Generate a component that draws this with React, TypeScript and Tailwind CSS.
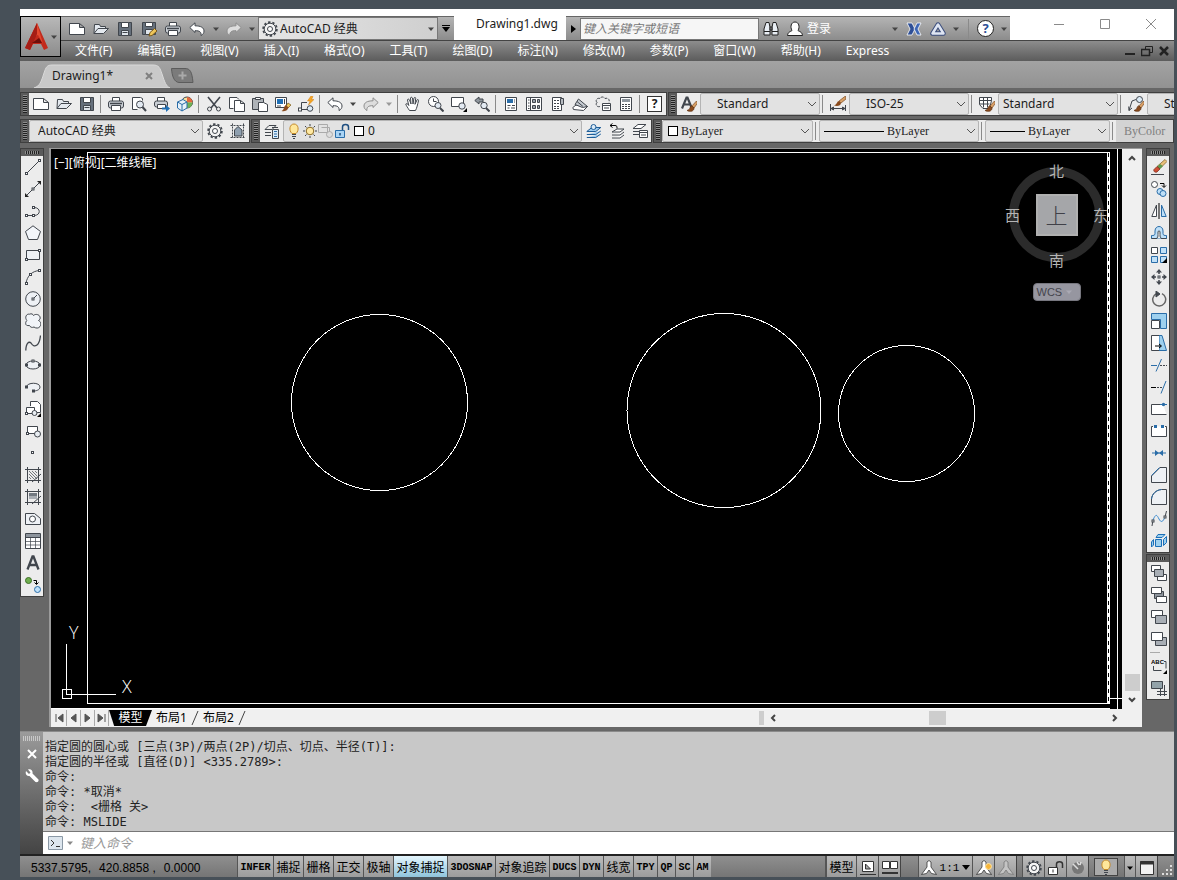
import type { ReactNode } from "react";

const INK = "#41464d";
const BLUE = "#2a6da8";

// small square grip used by most of the drawing icons
const Node = ({ x, y }: { x: number; y: number }) => (
  <rect x={x - 1} y={y - 1} width="2" height="2" fill="#fff" stroke={INK} />
);

const Brush = () => (
  <g transform="translate(5 5) scale(.7)">
    <path d="M15 0L8.500 7l3 3L16.500 3z" fill="#d9a066" stroke="#7a4a22" />
    <path d="M8.500 7C5 7 7 12 1.500 13.500c4 2.500 10 1.500 10-3.500z" fill="#8a4b1e" stroke="#5b2f10" />
  </g>
);

const icons: Record<string, ReactNode> = {
  new: <path d="M.5 2.500h10l5 4v7H.5z M10.500 2.500v4h5" fill="#fff" />,
  open: <path d="M1 12.500l.5-9h5l1 2h5v2 M1 12.500l4-5h10.500l-5 5z" fill="#e4e9ef" />,
  save: (
    <>
      <path d="M1.500 1.500h13v13h-13z" fill="#66707c" />
      <path d="M4.500 1.500h7v5h-7z" fill="#fff" />
      <path d="M4.500 9.500h7v5h-7z" fill="#dfe5eb" />
      <path d="M5.500 11.500h5" />
    </>
  ),
  saveAs: (
    <>
      <path d="M1.500 1.500h13v12h-13z" fill="#66707c" />
      <path d="M4.500 1.500h7v4h-7z" fill="#fff" />
      <path d="M4.500 8.500h7v5h-7z" fill="#dfe5eb" />
      <path d="M8 15l1-3.500 4.500-4L16 10l-5 4.500z" fill="#efc65a" stroke="#7a5a1c" />
    </>
  ),
  print: (
    <>
      <path d="M4.500 5V1.500h7V5" fill="#fff" />
      <rect x=".5" y="5" width="15" height="7" rx="2" fill="#c9ced4" />
      <path d="M3.500 9.500h9v5h-9z" fill="#fff" />
      <path d="M2 7.500h12" strokeWidth="1.500" />
    </>
  ),
  preview: (
    <>
      <path d="M11.500 4.500v-2l-2-1h-8v12h5" fill="#fff" />
      <circle cx="9" cy="8.500" r="3.500" fill="#e3eaf2" />
      <path d="M11.500 11l3.500 4" strokeWidth="2" />
    </>
  ),
  publish: (
    <>
      <path d="M3.500 5V1.500h7V5" fill="#fff" />
      <rect x=".5" y="5" width="13" height="6" rx="2" fill="#c9ced4" />
      <path d="M3.500 8.500h8v4h-8z" fill="#fff" />
      <path d="M8 11.500h4V9l4 3.500-4 3.500v-2.500H8z" fill="#1f6fb5" stroke="none" />
    </>
  ),
  globe: (
    <>
      <circle cx="10" cy="6.500" r="5.500" fill="#f5e3a0" />
      <path d="M10 1a5.500 5.500 0 015.500 5.500H10z" fill="#e3693f" stroke="none" />
      <path d="M10 12a5.500 5.500 0 005.500-5.500H10z" fill="#6db056" stroke="none" />
      <path d="M.5 6L6 3.500l4 2.500v6l-5 3-4.500-3z" fill="#e8f2fa" stroke={BLUE} />
      <path d="M.5 6L5 8.500 10 6M5 8.500V15" stroke={BLUE} />
    </>
  ),
  cut: (
    <>
      <path d="M2 1l9 11M14 1L5 12" strokeWidth="1.600" />
      <circle cx="3.500" cy="13" r="2" />
      <circle cx="12.500" cy="13" r="2" />
    </>
  ),
  copy: (
    <>
      <path d="M8 1.500H.5v11h4" fill="#fff" />
      <path d="M5.500 4.500h6l4 3v8h-10z M11.500 4.500v3h4" fill="#fff" />
      <path d="M8 1.500l2 2" />
    </>
  ),
  paste: (
    <>
      <path d="M.5 2.500h11v11H.5z" fill="#aeb3b8" />
      <path d="M3.500 1.500h5v2h-5z" fill="#fff" />
      <path d="M6.500 6.500h5l4 2v7h-9z" fill="#fff" />
    </>
  ),
  match: (
    <>
      <path d="M.5 1.500h11v10H.5z" fill="#fff" />
      <path d="M2 3h6v5H2z" fill="#1f6fb5" stroke="none" />
      <path d="M2 10h4M9.500 3v5" />
      <path d="M13 7l3 2-3 3-2-2z" fill="#efc65a" stroke="#7a5a1c" strokeWidth=".7" />
      <path d="M11 9l2.500 2.500c-1 4-5 4-7 3.500 3-1 2-5 4.500-6z" fill="#8a4b1e" stroke="none" />
    </>
  ),
  blockEdit: (
    <>
      <path d="M2 13.500h8 M3.500 12.500v-6H9" />
      <rect x=".5" y="12" width="3" height="3" fill="#fff" />
      <circle cx="12" cy="12.500" r="2.800" fill="#dcebf7" />
      <path d="M13 0l-3.500 5H12l-1.500 4L16 3.500h-2.500l1.500-3z" fill="#f6a623" stroke="#d07c10" strokeWidth=".5" />
    </>
  ),
  undo: <path d="M.8 6.500L6 1.800v3c6 0 9 2 9 5.200 0 2-1 3.500-3 4.500.5-3-1-5-6-4.800V11.500z" fill="#fff" />,
  redo: (
    <path
      d="M15.200 6.500L10 1.800v3c-6 0-9 2-9 5.200 0 2 1 3.500 3 4.500-.5-3 1-5 6-4.800V11.500z"
      fill="#ddd"
      stroke="#8d8d8d"
    />
  ),
  pan: (
    <path
      d="M4.500 14.500C3 12 1 9.500.8 8c1-1 2 0 3 1.500L2.500 4c0-1.200 1.500-1.200 2 0l1.500 4-.5-6c.2-1 1.500-1 2 0l.5 6 1-6c.5-1 1.700-.7 1.700.3l-.7 6 2-4.300c.7-1 1.800-.3 1.500.7-1 4-1.500 7-3 9.800z"
      fill="#fff"
    />
  ),
  zoomTime: (
    <>
      <circle cx="5.500" cy="5.500" r="5" fill="#fff" />
      <path d="M5.500 2.500v3h3" />
      <circle cx="10" cy="9.500" r="3" fill="#e3eaf2" />
      <path d="M12 12l3.500 3.500" strokeWidth="2" />
    </>
  ),
  zoomWin: (
    <>
      <path d="M.5 1.500h12v9H.5z" fill="#fff" />
      <circle cx="11" cy="10" r="3.200" fill="#e3eaf2" />
      <path d="M16 12v4h-4z" fill="#000" stroke="none" />
    </>
  ),
  zoomPrev: (
    <>
      <path d="M.8 4.500L5 1v2h4v3H5v2z" fill="#8e959c" />
      <circle cx="10" cy="9.500" r="3.200" fill="#e3eaf2" />
      <path d="M12 12l3.500 3.500" strokeWidth="2" />
    </>
  ),
  props: (
    <>
      <path d="M2.500 1.500h11v13h-11z" fill="#fff" />
      <path d="M4 3h6v4H4z" fill={BLUE} stroke="none" />
      <path d="M11 4h1M11 6h1M4.500 9.500h3M4.500 12h2M8 12h4M9 9.500h3" />
    </>
  ),
  center: (
    <>
      <path d="M.5 1.500h15v13H.5z M4.500 1.500v13" fill="#fff" />
      <path d="M6.500 3.500h3v3h-3zM11.500 3.500h2v3h-2zM6.500 9.500h3v3h-3zM11.500 9.500h2v3h-2z" fill="#9aa3ab" />
      <path d="M2 4h1.500M2 7h1.500M2 10h1.500M2 12.500h1.500" />
    </>
  ),
  palette: (
    <>
      <path d="M3.500 1.500h9v13h-9z" fill="#fff" />
      <path d="M5 4.500h5M5 7.500h5M5 10.500h5M5 12.500h5" strokeDasharray="2 1" />
      <path d="M11.500 2.500h3v6h-3z" fill="#b6bbc0" />
    </>
  ),
  sheetSet: (
    <>
      <path d="M.8 11.500L4 9l11.500 1.500-4 4-10-1z" fill="#fff" />
      <path d="M3 8.500L6.500 3 13 8.500l2.500 2-5 1z" fill="#c6ccd2" />
      <path d="M5 5.500l6 5" />
    </>
  ),
  markup: (
    <>
      <path d="M2 6.500c-2-2 0-5 3-4 1-2 4-2 5 0 3-1 5 1 4 4M2 6.500c-2 2 0 5 3 4" strokeDasharray="3 1" />
      <path d="M7.500 7.500h8v7h-8z" fill="#fff" />
      <path d="M7.500 9.500h8M9 12h5" />
    </>
  ),
  calc: (
    <>
      <path d="M2.500 1.500h11v13h-11z" fill="#fff" />
      <path d="M4 3h8v3H4z" fill="#8e979f" stroke="none" />
      <path d="M4 8.500h8M4 10.500h8M4 12.500h8" strokeDasharray="2 1" />
    </>
  ),
  textStyle: (
    <>
      <path d="M1 12.500L5.500 1.500h1l4 10M2.500 8.500h7" strokeWidth="2.200" />
      <Brush />
    </>
  ),
  dimStyle: (
    <>
      <path d="M.5 8v7M15.500 9v6M1 12.500h14M1 12.500l2.500-1.500v3zM15 12.500L12.500 11v3z" />
      <path d="M15.500 0L9 5l2 2 5-4z" fill="#d9a066" stroke="#7a4a22" strokeWidth=".7" />
      <path d="M9 5c-2 0-2 3.500-5 4.500 3 1 7 .5 7-2.500z" fill="#8a4b1e" stroke="none" />
    </>
  ),
  tableStyle: (
    <>
      <path d="M.5 1.500h12v3l-2 8H4l-3.500-4z" fill="#fff" />
      <path d="M.5 4.500h12M.5 8h10M4.500 1.500v10M8.500 1.500v10" />
      <Brush />
    </>
  ),
  leaderStyle: (
    <>
      <path d="M1 14.500L4 5l4-1.500M1 14.500l-.3-4M1 14.500l3-2.500" />
      <circle cx="11.500" cy="3.500" r="3" fill="#dcebf7" />
      <Brush />
    </>
  ),
  gear: (
    <>
      <circle cx="8" cy="8" r="6.900" strokeWidth="1.700" strokeDasharray="2.400 1.935" />
      <circle cx="8" cy="8" r="5.800" fill="#f3f3f3" />
      <circle cx="8" cy="8" r="2.500" fill="#fff" />
    </>
  ),
  workspace: (
    <>
      <path d="M.5 2.500h15M.5 14.500h15M2.500.5v15M13.500.5v15" strokeDasharray="2 1" />
      <path d="M4.500 13V7L8 3.500 12 7v6z" fill="#8fa0b0" />
    </>
  ),
  layerProps: (
    <>
      <path d="M1 6.500h7l4-4H5zM1 9.500h6M1 12.500h6M8 4.500H14" />
      <path d="M8.500 6.500h6v9h-6z" fill="#dcebf7" />
      <path d="M10 8.500h3M10 11h3M10 13.500h3" stroke={BLUE} />
    </>
  ),
  bulb: (
    <>
      <path d="M6 10.500C2.500 7.500 3.500 1 8 1s5.500 6.500 2 9.500z" fill="#ffe79a" stroke="#c58a2a" />
      <path d="M6 11.500h4M6 13.500h4M7 15.500h2" />
    </>
  ),
  sun: (
    <>
      <circle cx="8" cy="8" r="3.800" fill="#ffe9a3" stroke="#8a6a22" />
      <path d="M8 1v2M8 13v2M1 8h2M13 8h2M3 3l1.500 1.500M11.500 11.500L13 13M13 3l-1.500 1.500M3 13l1.500-1.500" />
    </>
  ),
  freeze: (
    <>
      <path d="M.5 1.500h9v8h-9zM3.500 4.500h8v7" stroke="#aaa" />
      <circle cx="11.500" cy="11.500" r="3" stroke="#aaa" fill="#ddd" />
    </>
  ),
  unlock: (
    <>
      <path d="M1.500 7.500h9v7h-9z" fill="#a9d4f5" stroke={BLUE} />
      <path d="M8.500 7V4c0-3.300 6-3.300 6 0v3M6 10v2.500" stroke="#1f4f80" strokeWidth="1.500" />
    </>
  ),
  layerCurrent: (
    <>
      <path d="M.8 14.500h9l5-3.500M.8 11.500h9l5-3.500M.8 8.500h9l5-4h-9z" fill="#9dcbee" stroke="#1d5c96" />
      <circle cx="7.500" cy="4" r="2.500" fill="#dcebf7" stroke="#1d5c96" />
    </>
  ),
  layerPrev: (
    <>
      <path d="M3 15h8l4-3M3 12h8l4-3M3 9h8l4-3H8z" fill="#fff" />
      <path d="M1 2.500h5c2 0 2 1 2 3M3.500.5L1 2.500l2.500 2" stroke="#000" />
    </>
  ),
  layerState: (
    <>
      <path d="M1 11.500h6M1 8.500h6M1 5.500h8l5-4H6z" fill="#fff" />
      <path d="M7.500 7.500h8v7h-8z" fill="#fff" />
      <path d="M7.500 9.500h8M9 12h5" />
    </>
  ),

  line: (<><path d="M1 15L15 1" /><Node x={1.5} y={14.5} /><Node x={14.5} y={1.5} /></>),
  xline: (
    <>
      <path d="M1 15L15 1" />
      <path d="M0 12v4h4zM16 4V0h-4z" fill="#222" stroke="none" />
      <Node x={8} y={8} />
    </>
  ),
  pline: (<><path d="M1 12.500h8c7 0 7-8 0-8" /><Node x={1.5} y={12.5} /><Node x={8.5} y={12.5} /><Node x={8.5} y={4.5} /></>),
  polygon: <path d="M8 .8L15.500 6.500 12.500 14.500h-9L.5 6.500z" fill="#f3f6fa" />,
  rectangle: (<><path d="M1.500 3.500h13v9h-13z" fill="#eef1f5" /><Node x={1.5} y={12.500} /><Node x={14.500} y={3.500} /></>),
  arc: (<><path d="M1 14.500C2 7 7 2 14.500 1.500" /><Node x={1.5} y={14.500} /><Node x={5.500} y={5.500} /><Node x={14.500} y={1.500} /></>),
  circle: (<><circle cx="8" cy="8" r="7.300" fill="#eef1f5" /><path d="M8 8l4-4" /><Node x={8} y={8} /></>),
  revcloud: (
    <path
      d="M2 7.500C-.5 5 1 .5 4.500 1.200c2-1 3.500 0 4 1.300 2-2 6-1 6.500 1.500.5 1.500 0 2.500-1.500 3.500 2.500 1 3 4 1.500 6s-4 2-6 .5c-2 1-4 0-4.500-1.500C2 13 .5 12 .7 10.300c0-1.300.3-2 1.300-2.800z"
      fill="#f1f4f8"
    />
  ),
  spline: <path d="M.8 15.500C1 8 4 6 6 8c2 3.500 4 3.500 6 2 2-1.500 3-5 3.500-9.500" strokeWidth="1.300" />,
  ellipse: (<><ellipse cx="8" cy="8" rx="7" ry="4" fill="#eef1f5" /><Node x={1.500} y={8} /><Node x={14.500} y={8} /><Node x={8} y={4} /></>),
  ellipseArc: (<><path d="M1.500 8C2 3 15 3 15 8c0 3-4 4-6.500 4" fill="#eef1f5" /><Node x={1.500} y={8} /><Node x={8.500} y={12} /></>),
  insert: (
    <>
      <path d="M5.500 5V.5h7l3 3v8H10" fill="#fff" />
      <path d="M1.500 12.500v-6h8v6z" fill="#fff" />
      <circle cx="9.500" cy="12" r="2.500" fill="#e8edf2" />
      <path d="M16 12v4h-4z" fill="#000" stroke="none" />
      <Node x={1.500} y={12.500} />
    </>
  ),
  block: (<><path d="M2.500 10.500v-7h10v7z" fill="#fff" /><circle cx="12.500" cy="11" r="3" fill="#e8edf2" /><Node x={2.500} y={10.500} /></>),
  point: <Node x={7.500} y={7.500} />,
  hatch: (
    <>
      <path d="M2.500 0v16M13.500 0v16M0 2.500h16M0 13.500h16" />
      <path d="M4 4l8 8M4 7l5 5M7 4l5 5M10 4l2 2M4 10l2 2" strokeWidth=".7" />
      <path d="M7 15l9-8" />
    </>
  ),
  gradient: (
    <>
      <path d="M2.500 0v16M13.500 0v16M0 2.500h16M0 13.500h16" />
      <path d="M4 4h8v3H4z" fill="#717880" stroke="none" />
      <path d="M4 7h8v3H4z" fill="#a9aeb4" stroke="none" />
      <path d="M7 15l9-8" />
    </>
  ),
  region: (<><path d="M.5 2.500h9l6 5v6H.5z" fill="#eef1f5" /><circle cx="7.500" cy="8" r="3" fill="#fff" /></>),
  table: (
    <>
      <path d="M.5.500h15v15H.5z" fill="#fff" />
      <path d="M1 1h14v3H1z" fill="#8d949c" stroke="none" />
      <path d="M.5 4.500h15" />
      <path d="M.5 8.500h15M.5 12h15M5.500 5v10M10.500 5v10" strokeWidth=".7" />
    </>
  ),
  mtext: <path d="M2.500 14.500L7.500 1.500h1l5 13M4.500 10h7" strokeWidth="2.300" />,
  addSel: (
    <>
      <circle cx="3.500" cy="3.500" r="3" fill="#6fae4e" stroke="#3d6f26" />
      <circle cx="12.500" cy="12.500" r="3" fill="#bfe0f8" stroke={BLUE} />
      <path d="M8.500 3.500h3v3.500M9.500 5.500l2 2 2-2" stroke="#000" />
    </>
  ),

  erase: (
    <>
      <path d="M0 15.500h13" />
      <path d="M14 .5l2 2-7 7-3-2z" fill="#e8c07a" stroke="#7a5a1c" strokeWidth=".7" />
      <path d="M9 5l3 2-3 3-3-2z" fill="#5f9a50" stroke="none" />
      <path d="M6 7.500l3 2.500-3 3c-2 1-4-1-3-2.500z" fill="#cf4e34" stroke="#73281a" strokeWidth=".7" />
    </>
  ),
  copyObj: (
    <>
      <circle cx="3.500" cy="3.500" r="3" fill="#fff" />
      <path d="M9 2.500h4v3.500M11 4.500l2 2 2-2" stroke="#000" />
      <circle cx="9" cy="10.500" r="3" fill="#bfe0f8" stroke={BLUE} />
      <circle cx="12" cy="12.500" r="3" fill="#bfe0f8" stroke={BLUE} />
    </>
  ),
  mirror: (
    <>
      <path d="M5.500 2v11.500H.8z" fill="#fff" />
      <path d="M10.500 2v11.500h4.700z" fill="#bfe0f8" stroke={BLUE} />
      <path d="M8 0v16" stroke="#000" />
    </>
  ),
  offset: (
    <>
      <path d="M.5 10.500c2 0 3.500 0 3.500-2V6c0-6 8-6 8 0v2.500c0 2 1.500 2 3.500 2v3H.5z" fill="#bfe0f8" stroke={BLUE} />
      <path d="M.5 13.500H5c2 0 2-2 2-4V7c0-1.500 2-1.500 2 0v2.500c0 2 0 4 2 4h4.500" fill="#fff" />
    </>
  ),
  array: (
    <>
      <path d="M.5.500h6v6h-6z" fill="#fff" />
      <path d="M9.500.5h6v6h-6zM.5 9.500h6v6h-6zM9.500 9.500h6v3l-3 3h-3z" fill="#bfe0f8" stroke={BLUE} />
      <path d="M16 11v5h-5z" fill="#000" stroke="none" />
    </>
  ),
  move: (
    <>
      <path d="M8 1v4M8 11v4M1 8h4M11 8h4" strokeWidth="1.500" />
      <path d="M8 0l3 3.500H5zM8 16l3-3.500H5zM0 8l3.500-3v6zM16 8l-3.500-3v6z" fill={INK} stroke="none" />
      <Node x={8} y={8} />
    </>
  ),
  rotate: (<><path d="M5 2.800a6.500 6.500 0 106-.2" strokeWidth="1.500" stroke="#666" /><path d="M5 0l4 3-4 3z" fill={INK} /></>),
  scale: (<><path d="M.5.500h15v15H9.500v-9H.5z" fill="#9dd0ef" stroke={BLUE} /><path d="M.5 7.500h8v8h-8z" fill="#fff" /></>),
  stretch: (
    <>
      <path d="M8 .5h3l4.500 15H8z" fill="#9dd0ef" stroke={BLUE} />
      <path d="M8 .5H.5v15H8" fill="#fff" />
      <path d="M4 11h6M8 9l2.500 2L8 13" stroke="#000" />
    </>
  ),
  trim: (<><path d="M0 8.500h6M5 14.500L10.500 2" stroke={BLUE} /><path d="M9 8.500h7" strokeDasharray="2 1" /></>),
  extend: (<><path d="M0 8.500h5" stroke="#000" /><path d="M6 8.500h6" strokeDasharray="2 1" /><path d="M10 14.500L15 2" stroke={BLUE} /></>),
  breakPt: (<><path d="M12 3.500H.5v10h15" fill="#fff" /><path d="M9 3.500h7" stroke={BLUE} /><circle cx="12.500" cy="3.500" r="1.700" fill={BLUE} stroke="none" /></>),
  break: (<><path d="M2 3.500H.5v10h15v-10H14" fill="#fff" /><path d="M3 2h3v3H3zM10 2h3v3h-3z" fill={BLUE} stroke="none" /></>),
  join: (<><path d="M1 8h14" stroke={BLUE} /><path d="M4 5l4 3-4 3zM12 5L8 8l4 3z" fill={BLUE} stroke="none" /></>),
  chamfer: (<><path d="M.5 9v6.500h15V.5H9L.5 9" fill="#eef1f5" /><path d="M.5 8.500L8.500.5" stroke={BLUE} /></>),
  fillet: (<><path d="M.5 10v5.500h15V.5h-5C5 1 1 5 .5 10" fill="#eef1f5" /><path d="M.5 10C1 5 5 1 10.500.5" stroke={BLUE} /></>),
  blend: (<><path d="M1 15l1-6M14 6l1.500-6" /><path d="M2 9C5 2 6 4 8 8s4 3 6-2" stroke="#3c8bd0" /><Node x={2} y={10} /><Node x={14} y={6} /></>),
  explode: (
    <path
      d="M4.500 6.500h6v7h-6zM5 4.500l2-3h7l-3 3zM12.500 6.500l3-3v6l-3 3zM2.500 6.500L.5 9v5l2-2z"
      fill="#9dd0ef"
      stroke="#1b6fb8"
    />
  ),
  front: (<><path d="M.5.500h9v6h-9zM6.500 9.500h9v6h-9z" fill="#fff" /><path d="M3.500 4.500h9v7h-9z" fill="#a8aeb5" /></>),
  back: (<><path d="M3.500 4.500h9v7h-9z" fill="#8d949c" /><path d="M.5.500h10v6H.5zM5.500 9.500h10v6h-10z" fill="#fff" /></>),
  above: (<><path d="M.5 1.500h11v7H.5z" fill="#fff" /><path d="M4.500 6.500h11v8h-11z" fill="#a8aeb5" /></>),
  under: (<><path d="M4.500 6.500h11v8h-11z" fill="#a8aeb5" /><path d="M.5 1.500h11v8H.5z" fill="#fff" /></>),
  textFront: (
    <>
      <text x="0" y="6" fontSize="6" fontWeight="700" fontFamily="Liberation Sans" fill="#000" stroke="none">ABC</text>
      <path d="M2.500 8v4.500h8M13 3.500h2v7" />
      <path d="M16 12v4h-4z" fill="#000" stroke="none" />
    </>
  ),
  hatchBack: (<><path d="M6 11.500h10M6 14.500h10M9.500 9v7M13.500 5v11" /><path d="M.5 1.500h11v7H.5z" fill="#93a3aa" /></>),
};

const Icon = ({ name }: { name: string }) => (
  <svg viewBox="0 0 16 16" className="size-4 shrink-0" fill="none" stroke={INK} strokeWidth="1">
    {icons[name]}
  </svg>
);

const Caret = ({ color = "#444" }: { color?: string }) => (
  <svg viewBox="0 0 6 4" className="h-1 w-1.5 shrink-0">
    <path d="M0 .5h6L3 4z" fill={color} />
  </svg>
);

const Chevron = () => (
  <svg viewBox="0 0 10 6" className="pointer-events-none absolute right-[2px] h-1.5 w-2.5" fill="none" stroke="#555">
    <path d="M1 1l4 4 4-4" />
  </svg>
);

const Tool = ({ name, label }: { name: string; label?: string }) => (
  <button aria-label={label ?? name} className="flex h-[22px] w-[23px] shrink-0 items-center justify-center">
    <Icon name={name} />
  </button>
);

const Drop = ({ label, color }: { label: string; color?: string }) => (
  <button aria-label={label} className="flex h-[22px] w-[13px] shrink-0 items-center justify-center">
    <Caret color={color} />
  </button>
);

const Sep = () => <div className="mx-[2px] my-[2px] w-[2px] shrink-0 border-l border-[#8a8a8a]" />;

const Grip = () => (
  <div className="flex w-2 shrink-0 bg-[#5a5a5a] p-[2px]">
    <div className="w-full bg-[#222] bg-[repeating-linear-gradient(#8d8d8d_0_1px,transparent_1px_2px)]" />
  </div>
);

const HGrip = () => (
  <div className="flex h-[7px] shrink-0 justify-center bg-[#5a5a5a] py-[2px]">
    <div className="w-[14px] bg-[#222] bg-[repeating-linear-gradient(90deg,#8d8d8d_0_1px,transparent_1px_2px)]" />
  </div>
);

const Bar = ({ children, className = "" }: { children: ReactNode; className?: string }) => (
  <div className={`flex h-6 border border-[#3f3f3f] bg-[#ececec] ${className}`}>
    <Grip />
    {children}
  </div>
);

type ComboProps = { label: string; value: string; width: string; pad?: string; children?: ReactNode };

const Combo = ({ label, value, width, pad = "pl-2", children }: ComboProps) => (
  <div className={`relative flex items-center rounded-xs border border-[#b4b4b4] bg-[#e2e2e2] ${width}`}>
    {children}
    <select aria-label={label} className={`h-full min-w-0 flex-1 appearance-none bg-transparent ${pad}`}>
      <option>{value}</option>
    </select>
    <Chevron />
  </div>
);

const menus = [
  "文件(F)", "编辑(E)", "视图(V)", "插入(I)", "格式(O)", "工具(T)", "绘图(D)",
  "标注(N)", "修改(M)", "参数(P)", "窗口(W)", "帮助(H)", "Express",
];

const standardTools = [
  ["new", "open", "save"],
  ["print", "preview", "publish", "globe"],
  ["cut", "copy", "paste", "match", "blockEdit"],
];
const zoomTools = ["pan", "zoomTime", "zoomWin", "zoomPrev"];
const paletteTools = ["props", "center", "palette", "sheetSet", "markup", "calc"];

const drawTools = [
  "line", "xline", "pline", "polygon", "rectangle", "arc", "circle", "revcloud", "spline", "ellipse",
  "ellipseArc", "insert", "block", "point", "hatch", "gradient", "region", "table", "mtext", "addSel",
];
const modifyTools = [
  "erase", "copyObj", "mirror", "offset", "array", "move", "rotate", "scale", "stretch",
  "trim", "extend", "breakPt", "break", "join", "chamfer", "fillet", "blend", "explode",
];

const toggles = [
  { name: "INFER", width: "w-[36px]" },
  { name: "捕捉", width: "w-[30px]" },
  { name: "栅格", width: "w-[30px]" },
  { name: "正交", width: "w-[30px]" },
  { name: "极轴", width: "w-[30px]" },
  { name: "对象捕捉", width: "w-[54px]", on: true },
  { name: "3DOSNAP", width: "w-[48px]" },
  { name: "对象追踪", width: "w-[54px]" },
  { name: "DUCS", width: "w-[30px]" },
  { name: "DYN", width: "w-[24px]" },
  { name: "线宽", width: "w-[30px]" },
  { name: "TPY", width: "w-[24px]" },
  { name: "QP", width: "w-[18px]" },
  { name: "SC", width: "w-[18px]" },
  { name: "AM", width: "w-[18px]" },
];

const log = [
  "指定圆的圆心或 [三点(3P)/两点(2P)/切点、切点、半径(T)]:",
  "指定圆的半径或 [直径(D)] <335.2789>:",
  "命令:",
  "命令: *取消*",
  "命令:  <栅格 关>",
  "命令: MSLIDE",
];

const Header = () => (
  <header className="relative">
    <div className="flex h-[31px] bg-white pt-[7px]">
      <div className="flex flex-none items-center border-t border-[#666] bg-linear-to-b from-[#b4b4b4] to-[#8c8c8c] pl-[45px]">
        {["new", "open", "save", "saveAs", "print", "undo"].map((n) => (
          <button key={n} aria-label={n} className="flex w-6 items-center justify-center">
            <Icon name={n} />
          </button>
        ))}
        <Drop label="undo list" />
        <Tool name="redo" />
        <Drop label="redo list" />
        <div className="relative flex h-[23px] w-[180px] items-center border border-[#777] bg-linear-to-r from-[#e6e6e6] to-[#cfcfcf] pl-[3px]">
          <Icon name="gear" />
          <select aria-label="workspace" className="min-w-0 flex-1 appearance-none pl-[2px]">
            <option>AutoCAD 经典</option>
          </select>
          <span className="pointer-events-none absolute right-[3px]">
            <Caret />
          </span>
        </div>
        <button aria-label="customize" className="flex w-4 flex-col items-center gap-[1px]">
          <span className="h-px w-2 bg-black" />
          <svg viewBox="0 0 8 5" className="h-[5px] w-2"><path d="M0 0h8L4 5z" /></svg>
        </button>
      </div>
      <h1 className="w-28 flex-none pl-[22px] whitespace-nowrap">Drawing1.dwg</h1>
      <div className="flex flex-none items-center border-t border-[#666] bg-linear-to-b from-[#b4b4b4] to-[#8c8c8c] text-white">
        <button aria-label="expand" className="flex w-[14px] justify-center">
          <svg viewBox="0 0 5 8" className="h-2 w-[5px]"><path d="M0 0v8l5-4z" /></svg>
        </button>
        <input
          aria-label="search"
          placeholder="键入关键字或短语"
          className="h-[22px] w-[179px] border border-[#777] bg-[#f6f6f6] px-[2px] italic placeholder:text-[#777]"
        />
        <button aria-label="find" className="flex w-6 justify-center">
          <svg viewBox="0 0 16 16" className="size-4" fill="#e9eef4" stroke="#222">
            <path d="M3 1.500h3l1 5v7.500H1V8zM10 1.500h3l2 6.500v6H9V6.500zM7 6h2v3H7zM1 10.500h6M9 10.500h6" />
          </svg>
        </button>
        <button className="flex items-center gap-1">
          <svg viewBox="0 0 16 16" className="ml-1 size-4" fill="#fff" stroke="#222">
            <path d="M5 9.500C3 6 4 1 8 1s5 5 3 8.500c1 1 4 1 4.500 5H.5c.5-4 3.500-4 4.500-5z" />
          </svg>
          登录
        </button>
        <div className="ml-[57px]"><Drop label="account" /></div>
        <button aria-label="exchange" className="flex w-[26px] justify-center">
          <svg viewBox="0 0 16 16" className="size-4" strokeWidth=".8">
            <path d="M1 2h5l3 6-3 6H1l3-6z" fill="#2e4f96" stroke="#fff" />
            <path d="M15 2h-4L8 8l3 6h4l-3-6z" fill="#3f67b5" stroke="#fff" />
          </svg>
        </button>
        <button aria-label="apps" className="flex w-[22px] justify-center">
          <svg viewBox="0 0 16 16" className="size-4" fill="none">
            <path d="M8 3.500L2.500 12.500h11z" stroke="#3a4c7c" strokeWidth="4.500" strokeLinejoin="round" />
            <path d="M8 3.500L2.500 12.500h11z" stroke="#dfe6f3" strokeWidth="2.500" strokeLinejoin="round" />
          </svg>
        </button>
        <Drop label="apps list" />
        <div className="mx-[6px] h-5 border-l border-[#8a8a8a]" />
        <button aria-label="help" className="ml-[2px] flex size-[17px] items-center justify-center rounded-full border border-[#222] bg-white text-[13px] leading-none font-bold text-[#2e4f96]">
          ?
        </button>
        <div className="ml-[3px]"><Drop label="help list" /></div>
      </div>
      <div className="mt-[-9px] ml-auto flex items-center gap-[34px] pr-[17px] text-[#8a8a8a]">
        <button aria-label="minimize"><svg viewBox="0 0 12 12" className="size-3" stroke="currentColor"><path d="M1 6.500h10" /></svg></button>
        <button aria-label="maximize"><svg viewBox="0 0 12 12" className="size-3" fill="none" stroke="currentColor"><path d="M1.500 1.500h9v9h-9z" /></svg></button>
        <button aria-label="close"><svg viewBox="0 0 12 12" className="size-3" stroke="currentColor"><path d="M1 1l10 10M11 1L1 11" /></svg></button>
      </div>
    </div>
    <nav className="flex h-[21px] items-center gap-[25px] border-t border-[#444] bg-linear-to-b from-[#8d8d8d] to-[#5c5c5c] pr-1 pl-[55px] whitespace-nowrap text-white">
      {menus.map((m) => (
        <button key={m}>{m}</button>
      ))}
      <div className="ml-auto flex gap-[5px]">
        <button aria-label="minimize drawing"><svg viewBox="0 0 12 12" className="size-3" stroke="#222" strokeWidth="2"><path d="M1 9h10" /></svg></button>
        <button aria-label="restore drawing"><svg viewBox="0 0 12 12" className="size-3" fill="none" stroke="#222"><path d="M4.500 4V1.500h7v6H9" /><path d="M.5 4.500h8v6h-8z" strokeWidth="1.500" /></svg></button>
        <button aria-label="close drawing"><svg viewBox="0 0 12 12" className="size-3" stroke="#222" strokeWidth="2.500"><path d="M2 2l8 8M10 2l-8 8" /></svg></button>
      </div>
    </nav>
    <button aria-label="application menu" className="absolute top-[7px] left-0 flex h-[41px] w-[41px] items-center gap-[2px] border border-black bg-linear-to-b from-[#b8b8b8] to-[#8d8d8d] pl-1">
      <svg viewBox="0 0 24 28" className="h-7 w-6">
        <path d="M12 0L0 25l5 2 3-6h8l3 6 4-2z" fill="#c22a1c" />
        <path d="M12 0L6 14l7-2 5 9z" fill="#e2492f" />
        <path d="M12 0L0 25l5 2 7-16z" fill="#a51d15" />
        <path d="M7 20l10 0-3-5z" fill="#6d0f0b" />
      </svg>
      <Caret />
    </button>
  </header>
);

const FileTabs = () => (
  <div className="flex h-[27px] items-end bg-linear-to-b from-[#a3a3a3] to-[#929292] pl-[14px]">
    <div className="relative flex h-6 w-[136px] items-center pl-[18px]">
      <svg viewBox="0 0 136 24" className="absolute inset-0 h-full w-full">
        <path d="M0 24C6 22 7 18 10 9 12 3 13 1 18 1h101c6 0 7 3 9 9 3 9 4 12 8 14z" fill="#c9c9c9" stroke="#dadada" />
      </svg>
      <button className="relative">Drawing1*</button>
      <button aria-label="close tab" className="relative ml-8">
        <svg viewBox="0 0 8 8" className="size-2" stroke="#808080" strokeWidth="2"><path d="M1 1l6 6M7 1L1 7" /></svg>
      </button>
    </div>
    <button aria-label="new tab" className="mb-1 flex">
      <svg viewBox="0 0 24 17" className="h-[17px] w-6" fill="#7b7b7b" stroke="#5c5c5c">
        <path d="M1.500 1.500H15c5 0 7 3 8 14H9C4 15 2 9 1.500 1.500z" />
        <path d="M12.500 4.500v8M8.500 8.500h8" stroke="#aaa" strokeWidth="2" />
      </svg>
    </button>
  </div>
);

const Toolbars = () => (
  <div className="flex flex-col gap-[3px] overflow-hidden bg-[#676767] pt-1 pb-[5px]">
    <div className="flex">
      <Bar>
        {standardTools.map((group) => (
          <div key={group[0]} className="flex">
            {group.map((n) => <Tool key={n} name={n} />)}
            <Sep />
          </div>
        ))}
        <Tool name="undo" />
        <Drop label="undo steps" />
        <Tool name="redo" />
        <Drop label="redo steps" color="#999" />
        <Sep />
        {zoomTools.map((n) => <Tool key={n} name={n} />)}
        <Sep />
        {paletteTools.map((n) => <Tool key={n} name={n} />)}
        <Sep />
        <button aria-label="help" className="mx-1 my-[3px] flex w-[15px] items-center justify-center border border-[#333] bg-white font-bold">?</button>
      </Bar>
      <Bar className="ml-px flex-1">
        <Tool name="textStyle" />
        <Combo label="text style" value="Standard" width="w-[120px] shrink-0" pad="pl-4" />
        <Sep />
        <Tool name="dimStyle" />
        <Combo label="dimension style" value="ISO-25" width="w-[120px] shrink-0" pad="pl-4" />
        <Sep />
        <Tool name="tableStyle" />
        <Combo label="table style" value="Standard" width="w-[120px] shrink-0" pad="pl-1" />
        <Sep />
        <Tool name="leaderStyle" />
        <div className="w-7 overflow-hidden">
          <Combo label="leader style" value="Standard" width="h-full w-[120px]" pad="pl-4" />
        </div>
      </Bar>
    </div>
    <div className="flex">
      <Bar>
        <Combo label="workspace" value="AutoCAD 经典" width="w-[174px]" />
        <Tool name="gear" />
        <Tool name="workspace" />
      </Bar>
      <Bar className="ml-px">
        <Tool name="layerProps" />
        <Combo label="layer" value="0" width="w-[299px]" pad="pl-1">
          <div className="ml-[2px] flex items-center">
            <Icon name="bulb" />
            <Icon name="sun" />
            <Icon name="freeze" />
            <Icon name="unlock" />
            <span className="ml-1 size-[10px] border border-black bg-white" />
          </div>
        </Combo>
        <Tool name="layerCurrent" />
        <Tool name="layerPrev" />
        <Tool name="layerState" />
      </Bar>
      <Bar className="ml-px flex-1 font-['Liberation_Serif',serif]">
        <Combo label="color" value="ByLayer" width="w-[151px]" pad="pl-[3px]">
          <span className="ml-[5px] size-[10px] border border-black bg-white" />
        </Combo>
        <Sep />
        <Combo label="linetype" value="ByLayer" width="w-[160px]" pad="pl-[3px]">
          <span className="ml-1 w-[60px] border-t border-black" />
        </Combo>
        <Sep />
        <Combo label="lineweight" value="ByLayer" width="w-[125px]" pad="pl-[3px]">
          <span className="ml-1 w-[35px] border-t border-black" />
        </Combo>
        <Sep />
        <select disabled aria-label="plot style" className="min-w-0 flex-1 appearance-none bg-[#d3d3d3] pl-2 text-[#808080]">
          <option>ByColor</option>
        </select>
      </Bar>
    </div>
  </div>
);

const SideBar = ({ tools }: { tools: string[] }) => (
  <div className="flex w-6 flex-col border border-[#3f3f3f] bg-[#ececec]">
    <HGrip />
    {tools.map((n) => <Tool key={n} name={n} />)}
  </div>
);

const ViewCube = () => (
  <div className="absolute top-3 right-3 flex w-[107px] flex-col items-center text-[15px] leading-5 text-[#b5b5b5]">
    <div className="relative flex h-[107px] w-full items-center justify-center">
      <div className="size-[95px] rounded-full border-[9px] border-[#2b2b2b]" />
      <span className="absolute top-0">北</span>
      <span className="absolute bottom-[-2px]">南</span>
      <span className="absolute left-[2px]">西</span>
      <span className="absolute right-[2px]">东</span>
      <button className="absolute flex size-[42px] items-center justify-center border-2 border-[#b0b0b0] bg-[#a5a6a9] text-[22px] font-light text-[#404048]">
        上
      </button>
    </div>
    <button className="mt-[15px] flex h-[18px] w-12 items-center gap-1 rounded-sm border border-[#77777f] bg-[#9696a0] pl-[3px] font-['Liberation_Sans',sans-serif] text-[11px] text-[#44444c]">
      WCS
      <Caret color="#aaaab4" />
    </button>
  </div>
);

const Canvas = () => (
  <div className="relative flex-1 overflow-hidden bg-black">
    <svg className="absolute inset-0 h-full w-full" fill="none" stroke="#fff" shapeRendering="crispEdges">
      <circle cx="328.500" cy="253.500" r="88" />
      <circle cx="673" cy="261.500" r="97" />
      <circle cx="855.500" cy="264.500" r="68" />
    </svg>
    <div className="absolute top-[3px] right-3 bottom-[5px] left-9 border border-white">
      <div className="absolute inset-y-0 right-0 w-[2px] bg-white bg-[repeating-linear-gradient(#000_0_4px,#fff_4px_8px)] bg-[length:1px_100%] bg-right bg-no-repeat" />
    </div>
    <div className="absolute inset-y-0 right-1 w-px bg-white" />
    <div className="absolute right-0 bottom-[10px] h-px w-3 bg-white" />
    <div className="absolute right-3 bottom-0 left-0 h-px bg-white" />
    <p className="absolute top-[6px] left-[3px] text-white">[−][俯视][二维线框]</p>
    <svg className="absolute bottom-0 left-2 h-[90px] w-20" fill="none" stroke="#fff" shapeRendering="crispEdges">
      <path d="M7.500 25v50.500H57M3.500 70.500h9v9h-9z" />
      <text x="10" y="20" fill="#fff" stroke="none" className="font-['Open_Sans',sans-serif] text-[18px] font-light">Y</text>
      <text x="63" y="74" fill="#fff" stroke="none" className="font-['Open_Sans',sans-serif] text-[18px] font-light">X</text>
    </svg>
    <ViewCube />
  </div>
);

const ScrollArrow = ({ d, label }: { d: string; label: string }) => (
  <button aria-label={label} className="flex size-[18px] items-center justify-center">
    <svg viewBox="0 0 8 8" className="size-2" fill="none" stroke="#444" strokeWidth="2"><path d={d} /></svg>
  </button>
);

const LayoutTabs = () => (
  <div className="flex h-[18px] items-center bg-[#f0f0f0] pl-[2px] text-black">
    {["M2 1v8M9 1v8L4 5z", "M8 1v8L3 5z", "M3 1v8l5-4z", "M9 1v8M2 1v8l5-4z"].map((d) => (
      <button key={d} aria-label="switch layout" className="flex h-4 w-[14px] items-center justify-center border-r border-[#aaa]">
        <svg viewBox="0 0 11 10" className="h-[10px] w-[11px]" fill="#555" stroke="#555"><path d={d} /></svg>
      </button>
    ))}
    <button className="h-4 w-[43px] bg-black leading-4 text-white [clip-path:polygon(0_0,100%_0,86%_100%,12%_100%)]">模型</button>
    <button className="ml-1">布局1</button>
    <svg viewBox="0 0 8 16" className="mx-1 h-4 w-2" stroke="#444"><path d="M7 1L1 15" /></svg>
    <button>布局2</button>
    <svg viewBox="0 0 8 16" className="ml-1 h-4 w-2" stroke="#444"><path d="M7 1L1 15" /></svg>
    <div className="ml-auto flex w-[383px] items-center">
      <div className="h-[14px] w-[5px] bg-[#cdcdcd]" />
      <ScrollArrow d="M6 1L3 4l3 3" label="scroll left" />
      <div className="ml-[147px] h-[14px] w-[17px] bg-[#cdcdcd]" />
      <div className="mr-[18px] ml-auto"><ScrollArrow d="M2 1l3 3-3 3" label="scroll right" /></div>
    </div>
  </div>
);

const Workspace = () => (
  <main className="flex flex-1 justify-between bg-[#676767] pb-1">
    <div className="flex flex-col items-start"><SideBar tools={drawTools} /></div>
    <div className="ml-[5px] flex min-w-0 flex-1 flex-col border-t border-l-2 border-[#9b9b9b]">
      <div className="flex flex-1">
        <Canvas />
        <div className="flex w-5 flex-col items-center bg-[#f0f0f0]">
          <ScrollArrow d="M1 6l3-3 3 3" label="scroll up" />
          <div className="mt-auto h-[17px] w-[15px] bg-[#cdcdcd]" />
          <ScrollArrow d="M1 2l3 3 3-3" label="scroll down" />
        </div>
      </div>
      <LayoutTabs />
    </div>
    <div className="mr-1 ml-1 flex flex-col gap-[1px]">
      <SideBar tools={modifyTools} />
      <div className="flex w-6 flex-col border border-[#3f3f3f] bg-[#ececec]">
        <HGrip />
        {["front", "back", "above", "under"].map((n) => <Tool key={n} name={n} />)}
        <div className="my-[2px] ml-[3px] w-[10px] border-t border-[#aaa]" />
        <Tool name="textFront" />
        <Tool name="hatchBack" />
      </div>
    </div>
  </main>
);

const CommandLine = () => (
  <section className="flex border-t border-[#8b8b8b] bg-[#c8c8c8]">
    <div className="flex w-[23px] flex-col items-center gap-2 bg-linear-to-b from-[#9b9b9b] to-[#444] pt-1">
      <div className="h-[5px] w-[17px] bg-[repeating-linear-gradient(90deg,#c8c8c8_0_1px,transparent_1px_2px)]" />
      <button aria-label="close command line" className="flex">
        <svg viewBox="0 0 10 10" className="size-[10px]" stroke="#fff" strokeWidth="2"><path d="M1 1l8 8M9 1L1 9" /></svg>
      </button>
      <button aria-label="customize command line" className="mt-[2px] flex">
        <svg viewBox="0 0 14 14" className="size-[14px]" fill="#fff">
          <path d="M1 2l3 3 1.500-1.500L3 .5c3-1 5 1 4.500 4l6 6c.5 2-1 3-3 2.500l-6-6C1.500 7.500 0 5 1 2z" />
        </svg>
      </button>
    </div>
    <div className="flex-1">
      <div className="pt-2 pb-[1px] pl-[2px] font-['DejaVu_Sans_Mono','Noto_Sans_CJK_SC',monospace] leading-[15px] whitespace-pre text-[#222]">
        {log.map((line, i) => <p key={i}>{line}</p>)}
      </div>
      <div className="flex h-[23px] items-center border-t border-[#777] bg-white pl-[5px]">
        <svg viewBox="0 0 15 14" className="h-[14px] w-[15px]" fill="#dde6ee" stroke="#8a98a5">
          <path d="M.5.500h14v13H.5z" />
          <path d="M3 4l3 3-3 3M8 10.500h4" stroke="#333" fill="none" />
        </svg>
        <Drop label="recent commands" color="#888" />
        <input aria-label="command" placeholder="键入命令" className="flex-1 pl-1 text-[13px] italic outline-none placeholder:text-[#999]" />
      </div>
    </div>
  </section>
);

const statusBtn = "flex h-full shrink-0 items-center justify-center border-l border-[#555] bg-linear-to-b pt-[2px]";
const statusFace = "from-[#bcbcbc] to-[#9c9c9c]";

const Figure = ({ faded = false }: { faded?: boolean }) => (
  <svg viewBox="0 0 16 16" className="size-4" fill={faded ? "#c4c4c4" : "#fff"} stroke={faded ? "#777" : "#333"} strokeWidth=".8">
    <path d="M8 .5L6 2v5L.5 14.500l5-1L8 10l2.500 3.500 5 1L10 7V2z" />
  </svg>
);

const StatusBar = () => (
  <footer className="flex h-[23px] items-stretch border-t-2 border-[#222] bg-linear-to-b from-[#8f8f8f] to-[#757575] text-black">
    <output className="flex w-[217px] items-center gap-2 pt-[2px] pl-[11px] font-['Liberation_Sans',sans-serif]">
      <span>5337.5795,</span>
      <span>420.8858 ,</span>
      <span>0.0000</span>
    </output>
    {toggles.map((t) => (
      <button
        key={t.name}
        aria-pressed={!!t.on}
        className={`${statusBtn} ${t.width} ${t.on ? "from-[#e4f5fc] to-[#8fc4dc]" : statusFace} ${
          /^[\dA-Z]+$/.test(t.name) ? "font-['Liberation_Mono',monospace] text-[10px] font-bold" : ""
        }`}
      >
        {t.name}
      </button>
    ))}
    <div className="ml-auto flex border-l border-[#555]">
      <button className={`${statusBtn} ${statusFace} w-[30px]`}>模型</button>
      <button aria-label="layout" className={`${statusBtn} ${statusFace} w-[22px]`}>
        <svg viewBox="0 0 16 16" className="size-4" fill="#fff" stroke="#333"><path d="M2.500 1.500h11v10h-11zM0 14.500h16M5.500 4v5h5z" /></svg>
      </button>
      <button aria-label="quick view" className={`${statusBtn} ${statusFace} w-[22px]`}>
        <svg viewBox="0 0 16 16" className="size-4" fill="#fff" stroke="#333"><path d="M.5 1.500h7v7h-7zM8.500 1.500h7v7h-7z" /><path d="M0 13h16" strokeWidth="2" /></svg>
      </button>
      <div className="w-[18px] border-l border-[#444]" />
      <button className={`${statusBtn} ${statusFace} w-[54px] gap-[3px] font-['Liberation_Mono',monospace] text-[11px]`}>
        <Figure />1:1
        <svg viewBox="0 0 8 5" className="h-[5px] w-2"><path d="M0 0h8L4 5z" /></svg>
      </button>
      <button aria-label="annotation visibility" className={`${statusBtn} ${statusFace} relative w-[22px]`}>
        <Figure />
        <span className="absolute right-[2px] bottom-[7px] size-[7px] rounded-full border border-[#fbe3a8] bg-[#f6b53a]" />
      </button>
      <button aria-label="auto scale" className={`${statusBtn} ${statusFace} w-[22px]`}><Figure faded /></button>
      <div className="w-[6px] border-l border-[#444]" />
      <button aria-label="workspace switching" className={`${statusBtn} ${statusFace} w-[22px]`}><Icon name="gear" /></button>
      <button aria-label="toolbar lock" className={`${statusBtn} ${statusFace} w-[22px]`}>
        <svg viewBox="0 0 16 16" className="size-4" fill="#fff" stroke="#333"><path d="M.5 7.500h9v7h-9zM5 9.500v3" /><path d="M8.500 7V4c0-3 6-3 6 0v4" fill="none" strokeWidth="1.500" /></svg>
      </button>
      <button aria-label="hardware acceleration" className={`${statusBtn} ${statusFace} w-[22px]`}>
        <svg viewBox="0 0 16 16" className="size-4"><circle cx="8" cy="8" r="6" fill="#777" /><path d="M3 4l5 5M7 2l2 3M11 2l-1 3" stroke="#ddd" strokeWidth="1.500" /></svg>
      </button>
      <div className="flex w-[36px] items-center border-l border-[#444] pl-[5px]">
        <button aria-label="isolate objects" className="flex h-[18px] w-6 items-center justify-center border border-[#444] bg-[#aaa]"><Icon name="bulb" /></button>
      </div>
      <button aria-label="status menu" className={`${statusBtn} ${statusFace} w-[11px]`}><Caret color="#000" /></button>
      <button aria-label="clean screen" className={`${statusBtn} ${statusFace} w-[22px]`}>
        <svg viewBox="0 0 16 16" className="size-4" fill="#f2f2f2" stroke="#333"><path d="M1.500 1.500h13v13h-13z" /><path d="M1 3h14" strokeWidth="3" /></svg>
      </button>
      <div className="flex w-[17px] items-end justify-end border-l border-[#444] p-[1px]">
        <svg viewBox="0 0 11 11" className="size-[11px]" fill="#ddd"><path d="M8 0h2v2H8zM4 4h2v2H4zM8 4h2v2H8zM0 8h2v2H0zM4 8h2v2H4zM8 8h2v2H8z" /></svg>
      </div>
    </div>
  </footer>
);

export default function App() {
  return (
    <div className="flex min-h-screen flex-col bg-[#475058] pt-[9px] pr-[3px] pb-[3px] pl-5 font-['Noto_Sans','Noto_Sans_CJK_SC',sans-serif] text-[12px] leading-4 text-[#1c1c1c]">
      <Header />
      <FileTabs />
      <Toolbars />
      <Workspace />
      <CommandLine />
      <StatusBar />
    </div>
  );
}
